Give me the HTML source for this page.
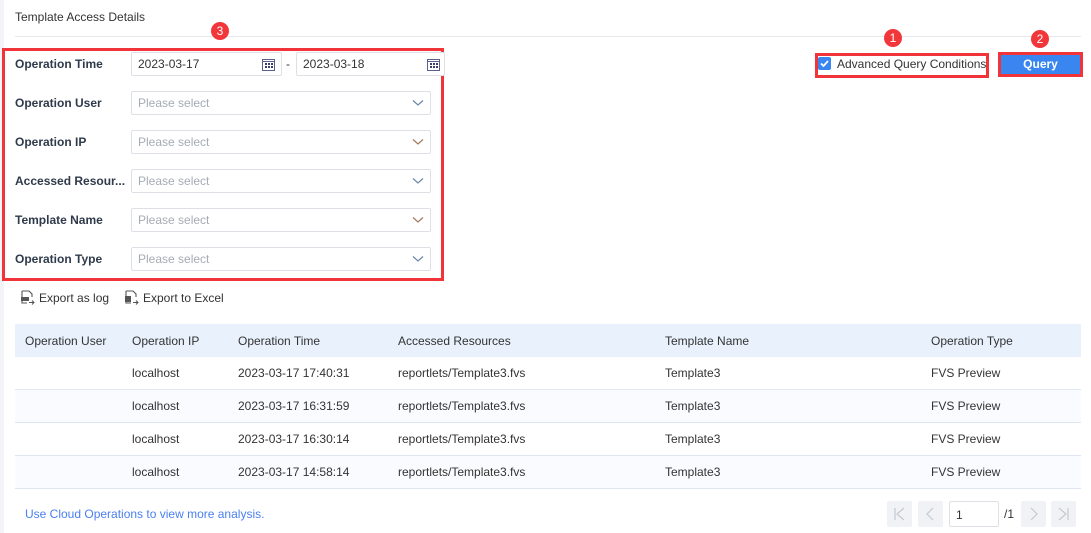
<!DOCTYPE html>
<html><head><meta charset="utf-8"><style>
*{margin:0;padding:0;box-sizing:border-box}
body{width:1091px;height:533px;background:#fff;font-family:"Liberation Sans",sans-serif;font-size:12px;color:#333;position:relative;overflow:hidden}
.a{position:absolute;white-space:nowrap}
.lbl{font-weight:bold;color:#2f3a4a;font-size:12px}
.inp{position:absolute;border:1px solid #dde0e5;background:#fff;height:24px;border-radius:2px}
.ph{color:#a5abb5;position:absolute;left:6px;top:4px}
.chev{position:absolute;right:6px;top:7px}
.badge{position:absolute;width:18px;height:18px;border-radius:50%;background:#f2373b;color:#fff;font-size:12px;text-align:center;line-height:18px}
.red{position:absolute;border:3px solid #f0343a}
.cell{position:absolute;top:9px}
.row{position:absolute;left:15px;width:1066px;height:33px;border-bottom:1px solid #dfe7f3}
.pb{position:absolute;top:501px;width:25px;height:26px;background:#f0f2f5;border-radius:2px}
</style></head><body>
<div class="a" style="left:0;top:0;width:4px;height:533px;background:#f3f4f7"></div>
<div class="a" style="left:15px;top:10px;color:#333">Template Access Details</div>
<div class="a" style="left:15px;top:36px;width:1066px;height:1px;background:#e6e8ec"></div>

<div class="red" style="left:2px;top:48px;width:442px;height:233px"></div>
<div class="badge" style="left:211px;top:22px">3</div>

<div class="a lbl" style="left:15px;top:57px">Operation Time</div>
<div class="inp" style="left:131px;top:52px;width:151px"><span class="a" style="left:6px;top:4px">2023-03-17</span>
<svg class="a" style="right:6px;top:5px" width="13" height="13" viewBox="0 0 13 13"><rect x="0.5" y="1.5" width="12" height="11" fill="none" stroke="#5b5f8a"/><line x1="0" y1="3.5" x2="13" y2="3.5" stroke="#5b5f8a"/><g fill="#3b3f6a"><rect x="3" y="5" width="2" height="2"/><rect x="6" y="5" width="2" height="2"/><rect x="9" y="5" width="2" height="2"/><rect x="3" y="8" width="2" height="2"/><rect x="6" y="8" width="2" height="2"/><rect x="9" y="8" width="2" height="2"/></g></svg></div>
<div class="a" style="left:286px;top:57px">-</div>
<div class="inp" style="left:296px;top:52px;width:149px"><span class="a" style="left:6px;top:4px">2023-03-18</span>
<svg class="a" style="right:4px;top:5px" width="13" height="13" viewBox="0 0 13 13"><rect x="0.5" y="1.5" width="12" height="11" fill="none" stroke="#5b5f8a"/><line x1="0" y1="3.5" x2="13" y2="3.5" stroke="#5b5f8a"/><g fill="#3b3f6a"><rect x="3" y="5" width="2" height="2"/><rect x="6" y="5" width="2" height="2"/><rect x="9" y="5" width="2" height="2"/><rect x="3" y="8" width="2" height="2"/><rect x="6" y="8" width="2" height="2"/><rect x="9" y="8" width="2" height="2"/></g></svg></div>

<div class="a lbl" style="left:15px;top:96px">Operation User</div>
<div class="inp" style="left:131px;top:91px;width:300px"><span class="ph">Please select</span><svg class="chev" width="12" height="8"><path d="M1 1.5L6 6L11 1.5" fill="none" stroke="#6b86a8" stroke-width="1.2"/></svg></div>
<div class="a lbl" style="left:15px;top:135px">Operation IP</div>
<div class="inp" style="left:131px;top:130px;width:300px"><span class="ph">Please select</span><svg class="chev" width="12" height="8"><path d="M1 1.5L6 6L11 1.5" fill="none" stroke="#a0785a" stroke-width="1.2"/></svg></div>
<div class="a lbl" style="left:15px;top:174px">Accessed Resour...</div>
<div class="inp" style="left:131px;top:169px;width:300px"><span class="ph">Please select</span><svg class="chev" width="12" height="8"><path d="M1 1.5L6 6L11 1.5" fill="none" stroke="#6b86a8" stroke-width="1.2"/></svg></div>
<div class="a lbl" style="left:15px;top:213px">Template Name</div>
<div class="inp" style="left:131px;top:208px;width:300px"><span class="ph">Please select</span><svg class="chev" width="12" height="8"><path d="M1 1.5L6 6L11 1.5" fill="none" stroke="#a0785a" stroke-width="1.2"/></svg></div>
<div class="a lbl" style="left:15px;top:252px">Operation Type</div>
<div class="inp" style="left:131px;top:247px;width:300px"><span class="ph">Please select</span><svg class="chev" width="12" height="8"><path d="M1 1.5L6 6L11 1.5" fill="none" stroke="#6b86a8" stroke-width="1.2"/></svg></div>

<div class="red" style="left:815px;top:53px;width:174px;height:25px"></div>
<div class="badge" style="left:884px;top:29px">1</div>
<div class="a" style="left:818px;top:57px;width:13px;height:13px;background:#3a86f0;border-radius:2px"><svg width="13" height="13"><path d="M3 6.5L5.5 9L10 4" fill="none" stroke="#fff" stroke-width="1.8"/></svg></div>
<div class="a" style="left:837px;top:57px;color:#333">Advanced Query Conditions</div>

<div class="red" style="left:998px;top:52px;width:85px;height:25px"></div>
<div class="a" style="left:1001px;top:55px;width:79px;height:19px;background:#3a86f0;color:#fff;text-align:center;line-height:19px;font-size:12px;font-weight:bold">Query</div>
<div class="badge" style="left:1031px;top:30px">2</div>

<svg class="a" style="left:20px;top:290px" width="16" height="15" viewBox="0 0 16 15"><path d="M2 1H9L12 4V7M2 1V13H7" fill="none" stroke="#555" stroke-width="1.1"/><rect x="1" y="7" width="8" height="4" fill="#555"/><path d="M9 12.5H14M12 10.5L14 12.5L12 14.5" fill="none" stroke="#555" stroke-width="1"/></svg>
<div class="a" style="left:39px;top:291px">Export as log</div>
<svg class="a" style="left:124px;top:290px" width="16" height="15" viewBox="0 0 16 15"><path d="M2 1H9L12 4V7M2 1V13H7" fill="none" stroke="#555" stroke-width="1.1"/><rect x="1" y="6" width="6" height="6" fill="#555"/><path d="M9 12.5H14M12 10.5L14 12.5L12 14.5" fill="none" stroke="#555" stroke-width="1"/></svg>
<div class="a" style="left:143px;top:291px">Export to Excel</div>

<div class="a" style="left:15px;top:324px;width:1066px;height:33px;background:#e9f1fc"></div>
<div class="a" style="top:334px;left:25px">Operation User</div>
<div class="a" style="top:334px;left:132px">Operation IP</div>
<div class="a" style="top:334px;left:238px">Operation Time</div>
<div class="a" style="top:334px;left:398px">Accessed Resources</div>
<div class="a" style="top:334px;left:665px">Template Name</div>
<div class="a" style="top:334px;left:931px">Operation Type</div>

<div class="row" style="top:357px"><span class="cell" style="left:117px">localhost</span><span class="cell" style="left:223px">2023-03-17 17:40:31</span><span class="cell" style="left:383px">reportlets/Template3.fvs</span><span class="cell" style="left:650px">Template3</span><span class="cell" style="left:916px">FVS Preview</span></div>
<div class="row" style="top:390px;background:#f9fbfe"><span class="cell" style="left:117px">localhost</span><span class="cell" style="left:223px">2023-03-17 16:31:59</span><span class="cell" style="left:383px">reportlets/Template3.fvs</span><span class="cell" style="left:650px">Template3</span><span class="cell" style="left:916px">FVS Preview</span></div>
<div class="row" style="top:423px"><span class="cell" style="left:117px">localhost</span><span class="cell" style="left:223px">2023-03-17 16:30:14</span><span class="cell" style="left:383px">reportlets/Template3.fvs</span><span class="cell" style="left:650px">Template3</span><span class="cell" style="left:916px">FVS Preview</span></div>
<div class="row" style="top:456px;background:#f9fbfe"><span class="cell" style="left:117px">localhost</span><span class="cell" style="left:223px">2023-03-17 14:58:14</span><span class="cell" style="left:383px">reportlets/Template3.fvs</span><span class="cell" style="left:650px">Template3</span><span class="cell" style="left:916px">FVS Preview</span></div>

<div class="a" style="left:25px;top:507px;color:#4a7ff0">Use Cloud Operations to view more analysis.</div>

<div class="pb" style="left:887px"><svg width="25" height="26"><path d="M8 7V19M17 7L10 13L17 19" fill="none" stroke="#c5c9d0" stroke-width="1.2"/></svg></div>
<div class="pb" style="left:918px"><svg width="25" height="26"><path d="M15 7L9 13L15 19" fill="none" stroke="#c5c9d0" stroke-width="1.2"/></svg></div>
<div class="a" style="left:949px;top:501px;width:50px;height:26px;border:1px solid #dde0e5;border-radius:2px"><span class="a" style="left:6px;top:6px">1</span></div>
<div class="a" style="left:1004px;top:507px">/1</div>
<div class="pb" style="left:1021px"><svg width="25" height="26"><path d="M10 7L16 13L10 19" fill="none" stroke="#c5c9d0" stroke-width="1.2"/></svg></div>
<div class="pb" style="left:1051px"><svg width="25" height="26"><path d="M8 7L15 13L8 19M17 7V19" fill="none" stroke="#c5c9d0" stroke-width="1.2"/></svg></div>
</body></html>
